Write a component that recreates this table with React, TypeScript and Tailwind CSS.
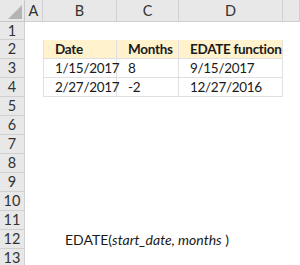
import React from "react";

const cols = [
  { key: "A", w: 18 },
  { key: "B", w: 74 },
  { key: "C", w: 62 },
  { key: "D", w: 104 },
  { key: "", w: 17 },
];

const rowHeights = [18, 19, 19, 19, 19, 19, 19, 19, 19, 19, 19, 19, 19];

const table = [
  ["Date", "Months", "EDATE function"],
  ["1/15/2017", "8", "9/15/2017"],
  ["2/27/2017", "-2", "12/27/2016"],
];

const font = { fontFamily: "Lato, 'Open Sans', 'Liberation Sans', sans-serif" };

export default function App() {
  return (
    <div className="w-[300px] h-[265px] overflow-hidden bg-white text-[#1a1a1a]" style={font}>
      {/* column header strip */}
      <div className="flex h-[22px]">
        <div className="w-[25px] shrink-0 bg-[#e8e8e8] border-r border-b border-[#c8c8c8] relative">
          <svg width="25" height="22" className="absolute inset-0">
            <polygon points="22,5 22,19 8,19" fill="#b4b4b4" />
          </svg>
        </div>
        {cols.map((c, i) => (
          <div
            key={i}
            className="shrink-0 bg-[#e8e8e8] border-r border-b border-[#d0d0d0] flex items-center justify-center text-[14.5px] text-[#333]"
            style={{ width: c.w }}
          >
            {c.key}
          </div>
        ))}
      </div>
      {/* rows */}
      {rowHeights.map((h, i) => {
        const r = i + 1;
        const t = r >= 2 && r <= 4 ? table[r - 2] : null;
        return (
          <div key={r} className="flex" style={{ height: h }}>
            <div className="w-[25px] shrink-0 bg-[#e8e8e8] border-r border-b border-[#d0d0d0] flex items-center justify-center text-[14.5px] text-[#333]">
              {r}
            </div>
            <div className="w-[18px] shrink-0" />
            {t ? (
              <div className={`flex ${r === 2 ? "bg-[#fff2cc] font-bold" : "bg-white"} border-b border-[#e0e0e0]`}>
                {t.map((v, j) => (
                  <div
                    key={j}
                    className={`shrink-0 pl-[11px] flex items-center text-[13.5px] tracking-[-0.3px] whitespace-nowrap border-r border-[#e0e0e0] ${j === 0 ? "border-l" : ""}`}
                    style={{ width: j === 0 ? 74 : j === 1 ? 62 : 104 }}
                  >
                    {v}
                  </div>
                ))}
              </div>
            ) : r === 12 ? (
              <div className="pl-[22px] flex items-center text-[14px] whitespace-nowrap">
                EDATE(<i>start_date, months</i>&nbsp;)
              </div>
            ) : null}
          </div>
        );
      })}
    </div>
  );
}
